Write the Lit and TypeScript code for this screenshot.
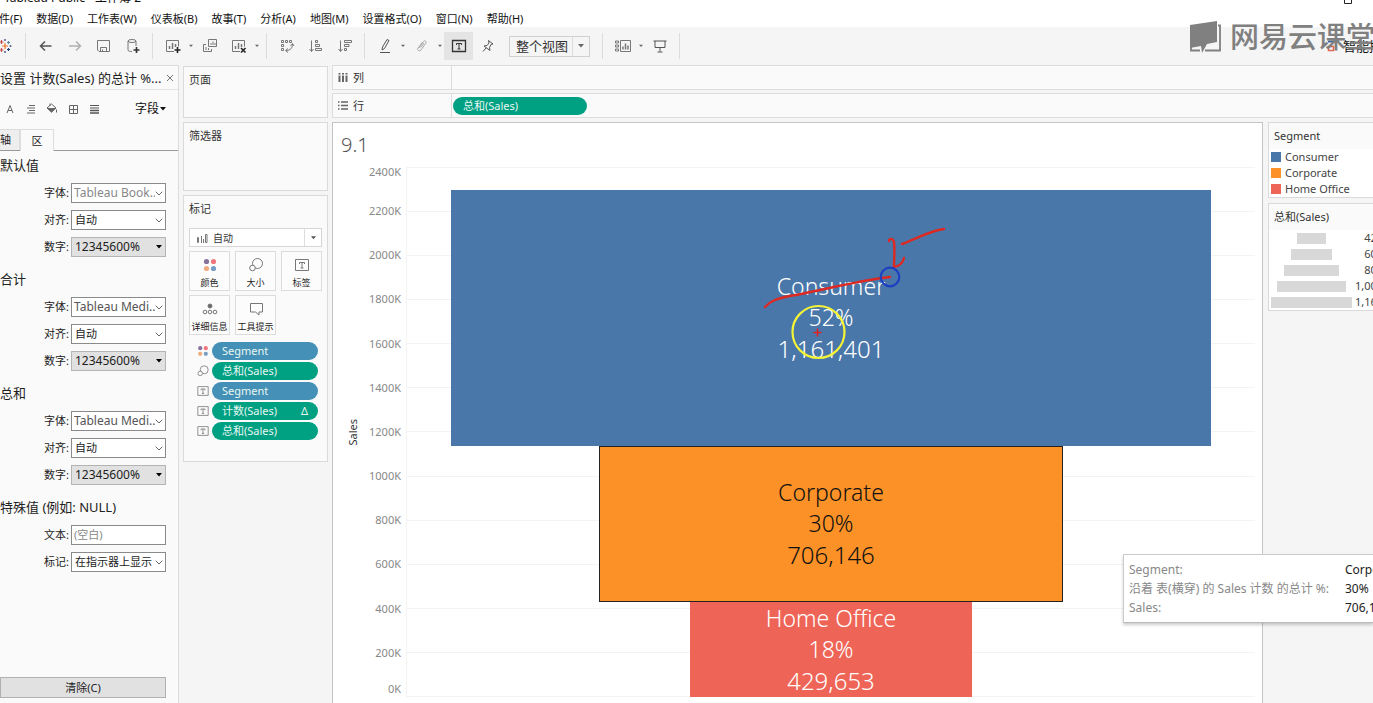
import { LitElement, html, svg, css, nothing } from "lit";
import { customElement } from "lit/decorators.js";

const MENUS = ["文件(F)", "数据(D)", "工作表(W)", "仪表板(B)", "故事(T)", "分析(A)", "地图(M)", "设置格式(O)", "窗口(N)", "帮助(H)"];

const AXIS_MAX = 2400000;
const TICKS = ["2400K", "2200K", "2000K", "1800K", "1600K", "1400K", "1200K", "1000K", "800K", "600K", "400K", "200K", "0K"];

const MARKS = [
  { name: "Consumer", share: "52%", sales: 1161401, width: 89.7, tone: "blue" },
  { name: "Corporate", share: "30%", sales: 706146, width: 54.7, tone: "orange" },
  { name: "Home Office", share: "18%", sales: 429653, width: 33.2, tone: "red" },
];

const SIZES = [
  { label: "429,653", width: 36 },
  { label: "600,000", width: 51 },
  { label: "800,000", width: 68 },
  { label: "1,000,000", width: 86 },
  { label: "1,161,401", width: 100 },
];

const chevron = html`<svg class="chev" viewBox="0 0 8 5" width="8" height="5"><path d="M.7.7 4 4 7.3.7" fill="none" stroke="#666"/></svg>`;
const wedge = (cls = "wedge") => html`<svg class=${cls} viewBox="0 0 6 4" width="6" height="4"><path d="M0 0h6L3 3.6z" fill="currentColor"/></svg>`;

const icon = (body: unknown) => html`<svg class="ico" viewBox="0 0 20 20" width="20" height="20" fill="none" stroke="#777" stroke-width="1">${body}</svg>`;

const I = {
  back: svg`<path d="M15.500 10H4.500M9 5.500 4.500 10 9 14.500" stroke="#555" stroke-width="1.500"/>`,
  forward: svg`<path d="M4 10h11.500M11 5.500l4.500 4.500-4.500 4.500" stroke="#b0b0b0" stroke-width="1.500"/>`,
  save: svg`<path d="M3.500 4.500h12v11h-10.500l-1.500-1.500zM6.500 15v-3.500h6v4"/><path d="M8.500 13.500v2"/>`,
  source: svg`<ellipse cx="9" cy="5" rx="4" ry="1.500"/><path d="M5 5v9c0 1 1.500 1.500 4 1.500M13 5v5"/><path d="M13.500 11v6M10.500 14h6" stroke="#333" stroke-width="1.600"/>`,
  sheet: svg`<path d="M11 15.500H3.500v-11h12v6"/><path d="M6.500 13v-3M9.500 13V7M12.500 11V8" stroke-width="1.500"/><path d="M14.500 11v6M11.500 14h6" stroke="#222" stroke-width="1.600"/>`,
  duplicate: svg`<path d="M8.500 3.500h8v7h-8z"/><path d="M11 9V7M13 9V5.500M15 9V7"/><path d="M6 8.500H3.500v7h8V13"/><path d="M6 14v-3M8.500 14v-2"/>`,
  clear: svg`<path d="M11 15.500H3.500v-11h12v6"/><path d="M6.500 13v-3M9.500 13V7M12.500 11V8" stroke-width="1.500"/><path d="m12 12 4.500 4.500m0-4.500L12 16.500" stroke="#222" stroke-width="1.600"/>`,
  swap: svg`<path d="M4.500 4.500h2v2h-2zM8.500 4.500h2v2h-2zM12.500 4.500h2v2h-2zM4.500 8.500h2v2h-2zM4.500 12.500h2v2h-2z"/><path d="M15.500 8c0 4-2 6.500-6.500 6.500M13.500 10l2-2.500 1.500 2.500M11 12.500l-2.500 2 2.500 2"/>`,
  asc: svg`<path d="M5.500 4.500v11M3.500 13l2 2.500 2-2.500"/><path d="M9.500 4.500h2v2h-2zM9.500 8.500h4v2h-4zM9.500 12.500h6v2h-6z"/>`,
  desc: svg`<path d="M5.500 4.500v11M3.500 13l2 2.500 2-2.500"/><path d="M9.500 4.500h7v2h-7zM9.500 8.500h4.500v2h-4.500zM9.500 12.500h2v2h-2z"/>`,
  pen: svg`<path d="M12 3.500l2 1-4.500 8-2.500 1.500.500-3zM5 16.500h10" stroke="#555"/>`,
  clip: svg`<path d="M7 12l4.500-6.500c1-1.500 3.500 0 2.500 1.500l-5 7c-1.500 2-4.500 0-3-2L10.500 6M9 11.500l3-4.500" stroke="#aaa"/>`,
  label: svg`<path d="M3.500 4.500h13v11h-13z" stroke="#333" stroke-width="1.300"/><path d="M7.500 9V7.500h5V9M10 7.500v5.500M8.500 13h3" stroke="#333"/>`,
  pin: svg`<path d="M10.500 4.500l4.500 3.500-2 .500-1.500 3 .500 3-6-4.500 3-.500 2-2.500zM8 12l-3 3.500" stroke="#555"/>`,
  cards: svg`<path d="M2.500 5h3v2h-3zM2.500 9h3v2h-3zM2.500 13h3v2h-3zM7.500 4.500h10v11h-10z"/><path d="M10 13.500v-3M12.500 13.500v-6M15 13.500v-4" stroke-width="1.500"/>`,
  present: svg`<path d="M3.500 5h13M5 5v6.500h10V5M10 11.500v4M7.500 16h5" stroke="#555"/>`,
};

const T_ICON = svg`<path d="M3.500 4.500h13v11h-13z"/><path d="M7.500 9V7.500h5V9M10 7.500v5.500M8.500 13h3"/>`;
const SIZE_ICON = svg`<circle cx="11.500" cy="8.500" r="5"/><circle cx="6.500" cy="13" r="2.800" fill="#fafafa"/>`;
const COLOR_ICON = svg`<g stroke="none"><circle cx="6.500" cy="6.500" r="2.600" fill="#85729a"/><circle cx="13.500" cy="6.500" r="2.600" fill="#f1777c"/><circle cx="6.500" cy="13.500" r="2.600" fill="#f0ac7d"/><circle cx="13.500" cy="13.500" r="2.600" fill="#779dc4"/></g>`;
const DETAIL_ICON = svg`<circle cx="10" cy="7" r="2" fill="#666"/><circle cx="5" cy="13" r="1.800"/><circle cx="10" cy="13" r="1.800"/><circle cx="15" cy="13" r="1.800"/>`;
const TIP_ICON = svg`<path d="M4.500 4.500h12v8.500H13v3l-3.500-3h-5z"/>`;

const SHELF_PILLS = [
  { icon: COLOR_ICON, text: "Segment", dim: true, delta: false },
  { icon: SIZE_ICON, text: "总和(Sales)", dim: false, delta: false },
  { icon: T_ICON, text: "Segment", dim: true, delta: false },
  { icon: T_ICON, text: "计数(Sales)", dim: false, delta: true },
  { icon: T_ICON, text: "总和(Sales)", dim: false, delta: false },
];

const base = css`
  * { box-sizing: border-box; }
  button, select, input { font: inherit; color: inherit; margin: 0; }
  button { background: none; border: 0; padding: 0; }
  h2, h3, p, ul { margin: 0; padding: 0; font-weight: 400; font-size: inherit; list-style: none; }
  svg { display: block; flex: none; }
`;

@customElement("tool-bar")
class ToolBar extends LitElement {
  static styles = [base, css`
    :host { display: flex; align-items: center; height: 38px; background: #f5f5f5; color: #666; }
    .logo { width: 20px; overflow: hidden; }
    .sep { width: 1px; height: 26px; margin: 0 5px; background: #dcdcdc; }
    .btn { width: 29px; height: 28px; display: grid; place-items: center; flex: none; }
    .on { background: #e4e4e4; }
    .drop { width: 8px; height: 28px; display: grid; place-items: center; flex: none; }
    .drop svg { width: 4px; }
    .fit { display: flex; position: relative; width: 81px; height: 21px; margin: 0 7px; border: 1px solid #d0d0d0; }
    .fit select { appearance: none; width: 100%; border: 0; background: none; padding: 0 0 0 6px; font-size: 13px; color: #333; line-height: 19px; }
    .fit-arrow { position: absolute; right: 0; top: 0; bottom: 0; width: 17px; border-left: 1px solid #ddd; display: grid; place-items: center; pointer-events: none; }
    .showme { margin-left: auto; width: 46px; overflow: hidden; white-space: nowrap; display: flex; gap: 6px; align-items: center; color: #111; font-size: 13px; }
  `];

  private tool(body: unknown, label: string, drop = false, on = false) {
    return html`<button class="btn ${on ? "on" : ""}" aria-label=${label}>${icon(body)}</button>${drop
      ? html`<button class="drop" aria-label="${label} 选项">${wedge()}</button>` : nothing}`;
  }

  render() {
    return html`
      <button class="logo" aria-label="Tableau">
        <svg viewBox="4 0 20 20" width="20" height="20" fill="none" stroke-width="1.200">
          <path d="M9 7v6M6 10h6" stroke="#e8762d"/>
          <path d="M5.500 4v4M3.500 6h4M5.500 12v4M3.500 14h4" stroke="#c0504d"/>
          <path d="M12.500 5v3M11 6.500h3" stroke="#59879b"/><path d="M12.500 12v3M11 13.500h3" stroke="#1f457e"/>
          <path d="M9 3v2M8 4h2M9 15v2M8 16h2M14.500 9v2M13.500 10h2" stroke="#5b6591"/>
        </svg>
      </button>
      <span class="sep"></span>
      ${this.tool(I.back, "后退")}${this.tool(I.forward, "前进")}${this.tool(I.save, "保存")}${this.tool(I.source, "新建数据源")}
      <span class="sep"></span>
      ${this.tool(I.sheet, "新建工作表", true)}${this.tool(I.duplicate, "复制")}${this.tool(I.clear, "清除工作表", true)}
      <span class="sep"></span>
      ${this.tool(I.swap, "交换行和列")}${this.tool(I.asc, "升序排序")}${this.tool(I.desc, "降序排序")}
      <span class="sep"></span>
      ${this.tool(I.pen, "突出显示", true)}${this.tool(I.clip, "组成员", true)}${this.tool(I.label, "显示标记标签", false, true)}${this.tool(I.pin, "固定轴")}
      <span class="fit">
        <select aria-label="适合"><option>整个视图</option></select>
        <span class="fit-arrow">${wedge()}</span>
      </span>
      <span class="sep"></span>
      ${this.tool(I.cards, "显示/隐藏卡", true)}${this.tool(I.present, "演示模式")}
      <span class="sep"></span>
      <button class="showme">
        <svg viewBox="0 0 10 12" width="10" height="12" fill="none"><path d="M1 1.500h9" stroke="#3c64a0" stroke-width="2"/><path d="M1.500 6.500h5v4h-5z" stroke="#e0675a" stroke-width="1.500"/></svg>
        <span>智能推荐</span>
      </button>`;
  }
}

@customElement("format-pane")
class FormatPane extends LitElement {
  static styles = [base, css`
    :host { display: flex; flex-direction: column; background: #fafafa; border: 1px solid #dcdcdc; border-left: 0; border-bottom: 0; color: #222; min-height: 0; }
    .head { display: flex; align-items: center; justify-content: space-between; height: 24px; border-bottom: 1px solid #e4e4e4; font-size: 13px; white-space: nowrap; padding-right: 4px; }
    .tools { display: flex; align-items: center; height: 37px; gap: 1px; }
    .tools button { width: 20px; display: grid; place-items: center; }
    .tools .fields { display: flex; align-items: center; gap: 1px; width: auto; margin-left: auto; margin-right: 12px; font-size: 12px; color: #111; }
    .tabs { display: flex; height: 22px; margin: 2px 0 1px; border-bottom: 1px solid #999; }
    .tab { width: 20px; background: #eee; border: 1px solid #ddd; border-bottom: 0; border-left: 0; text-align: left; height: 21px; }
    .tab.cur { width: 34px; background: #fafafa; height: 22px; text-align: center; border-left: 1px solid #ddd; }
    .group { margin-bottom: 6px; }
    .group h3 { font-size: 13px; line-height: 27px; white-space: nowrap; }
    .row { display: grid; grid-template-columns: 69px 95px; gap: 2px; align-items: center; height: 27px; }
    .row label { text-align: right; }
    .box { position: relative; }
    .box select, .box button, .box input { appearance: none; display: block; width: 100%; height: 20px; border: 1px solid #8a8a8a; background: #fff; border-radius: 0; padding: 0 12px 0 3px; line-height: 18px; text-align: left; outline: 0; }
    .box input { padding: 0 2px; }
    .box input::placeholder { color: #888; opacity: 1; }
    .box .latin { font-size: 12px; color: #555; padding: 0 10px 0 2px; }
    .box .faint { color: #888; }
    .box .num { font-size: 12px; background: #e1e1e1; border-color: #b4b4b4; }
    .box svg { position: absolute; right: 3px; top: 8px; pointer-events: none; }
    .box .wedge { right: 4px; color: #000; }
    .clear { margin: auto 12px 5px 0; height: 21px; background: #e1e1e1; border: 1px solid #b0b0b0; }
  `];

  private group(id: string, title: string, font: string, faint = false) {
    return html`<section class="group">
      <h3>${title}</h3>
      <div class="row"><label for="${id}-font">字体:</label>
        <span class="box"><select id="${id}-font" class="latin ${faint ? "faint" : ""}"><option>${font}</option></select>${chevron}</span></div>
      <div class="row"><label for="${id}-align">对齐:</label>
        <span class="box"><select id="${id}-align"><option>自动</option></select>${chevron}</span></div>
      <div class="row"><label for="${id}-num">数字:</label>
        <span class="box"><button id="${id}-num" class="num">12345600%</button>${wedge()}</span></div>
    </section>`;
  }

  render() {
    return html`
      <div class="head"><h2>设置 计数(Sales) 的总计 %...</h2>
        <button aria-label="关闭"><svg viewBox="0 0 8 8" width="8" height="8"><path d="m1 1 6 6m0-6L1 7" stroke="#777"/></svg></button></div>
      <div class="tools">
        <button aria-label="字体"><svg viewBox="0 0 10 10" width="10" height="10" fill="none" stroke="#666"><path d="M2 9 5 1.500 8 9M3 6.500h4"/></svg></button>
        <button aria-label="对齐"><svg viewBox="0 0 10 10" width="10" height="10" stroke="#666"><path d="M3 1.500h6M1 4h8M3 6.500h6M1 9h8"/></svg></button>
        <button aria-label="阴影"><svg viewBox="0 0 12 11" width="12" height="11" fill="none" stroke="#666"><path d="m1 5 4.500-4 4.500 4-4.500 4zM4 3V.5"/><path d="M1.500 5.500h8L5.500 9zM10.500 6.500v3" fill="#666"/></svg></button>
        <button aria-label="边界"><svg viewBox="0 0 10 10" width="10" height="10" fill="none" stroke="#666"><path d="M1.500 1.500h8v8h-8zM5.500 1.500v8M1.500 5.500h8"/></svg></button>
        <button aria-label="线"><svg viewBox="0 0 10 10" width="10" height="10" stroke="#555"><path d="M1 1.500h9M1 4h9" /><path d="M1 6.500h9M1 9h9" stroke-width="1.500"/></svg></button>
        <button class="fields">字段 ${wedge()}</button>
      </div>
      <div class="tabs"><button class="tab">轴</button><button class="tab cur">区</button></div>
      ${this.group("def", "默认值", "Tableau Book..", true)}
      ${this.group("tot", "合计", "Tableau Medi..")}
      ${this.group("grand", "总和", "Tableau Medi..")}
      <section class="group">
        <h3>特殊值 (例如: NULL)</h3>
        <div class="row"><label for="sp-text">文本:</label><span class="box"><input id="sp-text" type="text" placeholder="(空白)"></span></div>
        <div class="row"><label for="sp-mark">标记:</label><span class="box"><select id="sp-mark"><option>在指示器上显示</option></select>${chevron}</span></div>
      </section>
      <button class="clear">清除(C)</button>`;
  }
}

@customElement("card-column")
class CardColumn extends LitElement {
  static styles = [base, css`
    :host { display: flex; flex-direction: column; gap: 4px; color: #333; }
    .card { background: #fafafa; border: 1px solid #dadada; padding: 5px; }
    .card h2 { line-height: 16px; }
    .pages { height: 52px; }
    .filters { height: 69px; }
    .marks { height: 267px; }
    .type { position: relative; display: flex; align-items: center; height: 19px; margin: 11px 0 4px; border: 1px solid #d6d6d6; background: #fff; padding-left: 7px; font-size: 10px; }
    .type select { appearance: none; flex: 1; border: 0; background: none; padding: 0 0 0 5px; outline: 0; }
    .type-arrow { position: absolute; right: 0; top: 0; bottom: 0; width: 17px; border-left: 1px solid #ddd; display: grid; place-items: center; pointer-events: none; color: #555; }
    .type-arrow svg { width: 5px; }
    .shelf { display: grid; grid-template-columns: repeat(3, 1fr); gap: 4px 5px; }
    .shelf button { display: flex; flex-direction: column; align-items: center; justify-content: space-between; height: 40px; border: 1px solid #dcdcdc; background: #fcfcfc; padding: 3px 0 1px; font-size: 9px; line-height: 12px; color: #222; white-space: nowrap; }
    .pills { display: flex; flex-direction: column; gap: 2px; margin-top: 7px; }
    .pills li { display: grid; grid-template-columns: 23px 1fr; align-items: center; padding-right: 4px; }
    .pills .ico { width: 16px; height: 16px; justify-self: center; margin-left: 4px; }
    .pill { display: flex; justify-content: space-between; align-items: center; height: 18px; border-radius: 9px; padding: 0 10px; color: #e8f7f2; background: #00a082; }
    .pill.dim { background: #4490b6; }
  `];

  render() {
    const cell = (body: unknown, label: string) => html`<button>${icon(body)}<span>${label}</span></button>`;
    return html`
      <section class="card pages"><h2>页面</h2></section>
      <section class="card filters"><h2>筛选器</h2></section>
      <section class="card marks">
        <h2>标记</h2>
        <div class="type">
          <svg viewBox="0 0 11 10" width="11" height="10" fill="none" stroke="#777"><path d="M.5 4.500h1v5h-1zM4.500 3v7M6.500 6v4M8.500 1.500h1.500v8H8.500z"/></svg>
          <select aria-label="标记类型"><option>自动</option></select>
          <span class="type-arrow">${wedge()}</span>
        </div>
        <div class="shelf">
          ${cell(COLOR_ICON, "颜色")}${cell(SIZE_ICON, "大小")}${cell(T_ICON, "标签")}${cell(DETAIL_ICON, "详细信息")}${cell(TIP_ICON, "工具提示")}
        </div>
        <ul class="pills">
          ${SHELF_PILLS.map((p) => html`<li>${icon(p.icon)}<button class="pill ${p.dim ? "dim" : ""}"><span>${p.text}</span>${p.delta ? html`<span>Δ</span>` : nothing}</button></li>`)}
        </ul>
      </section>`;
  }
}

@customElement("funnel-view")
class FunnelView extends LitElement {
  static styles = [base, css`
    :host { display: flex; flex-direction: column; background: #fff; border: 1px solid #c4c4c4; border-bottom: 0; min-width: 0; padding: 8px 7px 6px 8px; }
    h2 { font-size: 20px; line-height: 28px; font-weight: 300; color: #555; }
    .chart { flex: 1; display: grid; grid-template-columns: 24px 41px 1fr; min-height: 0; margin-top: 8px; }
    .name { writing-mode: vertical-rl; transform: rotate(180deg); justify-self: center; align-self: center; color: #333; }
    .ticks { display: flex; flex-direction: column; justify-content: space-between; margin: -9px 0; padding-right: 5px; text-align: right; line-height: 18px; color: #888; }
    .ticks span:first-child { padding-top: 5px; height: 18px; }
    .ticks span:last-child { line-height: 2px; height: 18px; }
    .plot { display: grid; border-left: 1px solid #f3f3f3; min-height: 0; }
    .grid, .bars { grid-area: 1 / 1; min-height: 0; display: flex; flex-direction: column; }
    .grid i { flex: 1; border-top: 1px solid #f3f3f3; }
    .grid { border-bottom: 1px solid #f3f3f3; }
    .bars { justify-content: flex-end; align-items: center; }
    .bar { display: grid; place-items: center; flex: none; }
    .bar > * { grid-area: 1 / 1; }
    .bar p { font-size: 23px; line-height: 31px; font-weight: 300; text-align: center; color: #fff; }
    .figure { font-size: 24px; }
    .blue { background: #4a77aa; }
    .orange { background: #fc9227; outline: 1px solid #222; outline-offset: -1px; }
    .orange p { color: #111; }
    .red { background: #ee6557; }
  `];

  render() {
    return html`
      <h2>9.1</h2>
      <div class="chart">
        <span class="name">Sales</span>
        <div class="ticks">${TICKS.map((t) => html`<span>${t}</span>`)}</div>
        <div class="plot">
          <div class="grid">${TICKS.slice(1).map(() => html`<i></i>`)}</div>
          <div class="bars">
            ${MARKS.map((m) => html`<div class="bar ${m.tone}" style="width:${m.width}%;height:${(m.sales / AXIS_MAX) * 100}%">
              <p>${m.name}<br>${m.share}<br><span class="figure">${m.sales.toLocaleString("en-US")}</span></p>
              ${m.tone === "blue" ? this.ink() : nothing}
            </div>`)}
          </div>
        </div>
      </div>`;
  }

  private ink() {
    return html`<svg viewBox="711 218 240 200" width="240" height="200" fill="none" stroke-linecap="round" stroke-linejoin="round">
      <g stroke="#dc2a22" stroke-width="2.400">
        <path d="M765 307c5-6 12-8 20-10 35-6 70-16 105-20"/>
        <path d="M889 241c0-3 4-3 5 1 1 8 0 17 0 25 4 0 9-4 10-9"/>
        <path d="M902 244c14-5 27-13 42-15"/>
      </g>
      <path d="M817.500 329v7M814 332.500h7" stroke="#e02020" stroke-width="1.500"/>
      <circle cx="818.500" cy="332" r="26" stroke="#f4f436" stroke-width="2.200"/>
      <circle cx="890" cy="277" r="9.300" stroke="#1c3fc4" stroke-width="2.200"/>
    </svg>`;
  }
}

@customElement("legend-column")
class LegendColumn extends LitElement {
  static styles = [base, css`
    :host { display: flex; flex-direction: column; gap: 5px; overflow: hidden; color: #444; }
    .card { border: 1px solid #dadada; border-right: 0; background: #fff; }
    h2 { background: #fafafa; line-height: 26px; padding-left: 5px; color: #333; }
    li { display: flex; align-items: center; height: 16px; padding-left: 2px; white-space: nowrap; }
    .sw { width: 10px; height: 10px; margin-right: 4px; }
    .blue { background: #4a77aa; } .orange { background: #fc9227; } .red { background: #ee6557; }
    .track { width: 81px; flex: none; display: flex; justify-content: center; }
    .bar { height: 11px; background: #d8d8d8; }
    .val { width: 53px; flex: none; text-align: right; }
  `];
  render() {
    return html`
      <section class="card"><h2>Segment</h2><ul>${MARKS.map((m) => html`<li><span class="sw ${m.tone}"></span>${m.name}</li>`)}</ul></section>
      <section class="card"><h2>总和(Sales)</h2><ul>${SIZES.map((s) => html`<li><span class="track"><span class="bar" style="width:${s.width}%"></span></span><span class="val">${s.label}</span></li>`)}</ul></section>`;
  }
}

@customElement("app-root")
class AppRoot extends LitElement {
  static styles = [base, css`
    :host { display: flex; flex-direction: column; position: relative; height: 100vh; overflow: hidden; background: #f5f5f5; font: 11px/16px "Noto Sans", "Open Sans", "Noto Sans CJK SC", sans-serif; color: #222; }
    .title { display: flex; justify-content: space-between; align-items: flex-end; height: 11px; padding: 0 20px 5px 4px; background: #fff; color: #111; font-size: 12px; }
    .menu { display: flex; gap: 14px; height: 16px; background: #fff; padding-left: 0; margin-left: -12px; color: #111; }
    .menu button { white-space: nowrap; }
    .work { flex: 1; min-height: 0; display: grid; grid-template-columns: 179px 145px minmax(0, 1fr); column-gap: 4px; }
    .cards { padding-top: 1px; }
    .main { display: flex; flex-direction: column; min-width: 0; min-height: 0; }
    .shelf { display: grid; grid-template-columns: 119px 1fr; height: 25px; border: 1px solid #dcdcdc; border-right: 0; background: #fafafa; margin-bottom: 3px; color: #333; }
    .shelf + .shelf { margin-bottom: 4px; }
    .shelf-name { display: flex; align-items: center; gap: 5px; padding-left: 5px; border-right: 1px solid #dcdcdc; }
    .shelf-body { display: flex; align-items: center; padding-left: 1px; }
    .pill { width: 134px; height: 18px; border-radius: 9px; background: #00a082; color: #e8f7f2; text-align: left; padding-left: 10px; }
    .stage { flex: 1; min-height: 0; display: grid; grid-template-columns: minmax(0, 1fr) 105px; column-gap: 5px; }
    .tip { position: absolute; right: 0; bottom: 80px; width: 250px; height: 69px; overflow: hidden; background: #fff; border: 1px solid #ccc; border-right: 0; border-bottom-color: #bbb; box-shadow: 0 2px 3px #0003; padding: 5px 0 0 5px; display: grid; grid-template-columns: 214px max-content; column-gap: 2px; grid-auto-rows: 19px; align-items: center; white-space: nowrap; color: #888; font-size: 12px; }
    .tip b { font-weight: 400; color: #222; }
    .brand { position: absolute; right: 0; top: 18px; width: 183px; height: 38px; overflow: hidden; display: flex; align-items: center; gap: 9px; color: #808080; font-size: 29px; font-weight: 500; line-height: 38px; white-space: nowrap; pointer-events: none; }
  `];

  render() {
    return html`
      <div class="title"><span>Tableau Public - 工作簿 2</span>
        <svg viewBox="0 0 10 10" width="10" height="10" fill="none"><path d="M1.500 1.500h7v6h-7z" stroke="#222"/></svg></div>
      <nav class="menu">${MENUS.map((m) => html`<button>${m}</button>`)}</nav>
      <tool-bar></tool-bar>
      <div class="work">
        <format-pane></format-pane>
        <card-column class="cards"></card-column>
        <div class="main">
          <div class="shelf"><div class="shelf-name">
            <svg viewBox="0 0 10 9" width="10" height="9" stroke="#666" stroke-width="2"><path d="M1.500 0v1.500M5 0v1.500M8.500 0v1.500M1.500 2.500V9M5 2.500V9M8.500 2.500V9"/></svg>列</div><div class="shelf-body"></div></div>
          <div class="shelf"><div class="shelf-name">
            <svg viewBox="0 0 10 9" width="10" height="9" stroke="#666" stroke-width="1.500"><path d="M0 1h1.500M0 4.500h1.500M0 8h1.500M3 1h7M3 4.500h7M3 8h7"/></svg>行</div><div class="shelf-body"><button class="pill">总和(Sales)</button></div></div>
          <div class="stage">
            <funnel-view></funnel-view>
            <legend-column></legend-column>
          </div>
        </div>
      </div>
      <div class="tip">
        <span>Segment:</span><b>Corporate</b>
        <span>沿着 表(横穿) 的 Sales 计数 的总计 %:</span><b>30%</b>
        <span>Sales:</span><b>706,146</b>
      </div>
      <div class="brand">
        <svg viewBox="0 0 31 33" width="31" height="33"><path d="M0 4 27 0v21l-10 2-5 9-1-7-11 2z" fill="#808080"/><path d="M28 4.500h2v25H15M1 25v4.500h9" fill="none" stroke="#808080" stroke-width="1.800"/></svg>
        <span>网易云课堂</span>
      </div>`;
  }
}
